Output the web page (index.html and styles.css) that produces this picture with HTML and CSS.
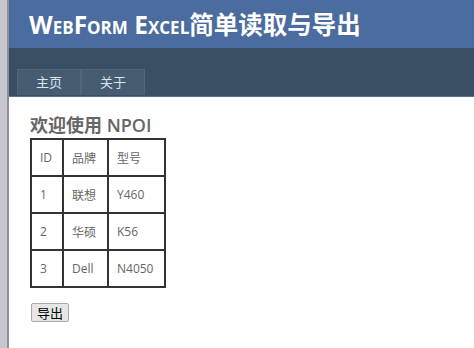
FILE: index.html
```html
<!DOCTYPE html>
<html>
<head>
  <title>WebForm Excel简单读取与导出</title>
  <link rel="stylesheet" href="styles.css">
</head>
<body>

  <div class="page">
    <div class="header">
      <h1>WebForm Excel简单读取与导出</h1>
    </div>
    <div class="nav">
      <div class="menu">
        <a href="#">主页</a>
        <a href="#">关于</a>
      </div>
    </div>

    <div class="main">
      <h2>欢迎使用 NPOI</h2>
      <table class="grid">
        <tr><td class="c1">ID</td><td class="c2">品牌</td><td class="c3">型号</td></tr>
        <tr><td>1</td><td>联想</td><td>Y460</td></tr>
        <tr><td>2</td><td>华硕</td><td>K56</td></tr>
        <tr><td>3</td><td>Dell</td><td>N4050</td></tr>
      </table>
      <button class="export">导出</button>
    </div>
  </div>

</body>
</html>
```
FILE: styles.css
```css
body {
  margin: 0;
  background-color: #c6c6ce;
  font-family: "Open Sans", "Noto Sans CJK SC", sans-serif;
  color: #696969;
}

.page {
  margin-left: 7px;
  border-left: 2px solid #8e8e96;
  background-color: #fff;
  height: 348px;
}

.header {
  background-color: #4b6c9e;
  height: 48px;
}

.header h1 {
  margin: 0;
  padding: 8px 0 0 20px;
  font-size: 24.5px;
  font-variant: small-caps;
  font-weight: bold;
  color: #fff;
  line-height: 34px;
  font-family: "Open Sans", "Noto Sans CJK SC", sans-serif;
}

.nav {
  background-color: #3a4f63;
  height: 48px;
  border-bottom: 1px solid #5c7590;
}

.menu {
  display: flex;
  padding: 21px 0 0 8px;
}

.menu a {
  display: block;
  width: 62px;
  height: 25px;
  line-height: 25px;
  text-align: center;
  background-color: #465c71;
  border: 1px solid #4f667c;
  border-bottom: none;
  color: #dde4ec;
  font-size: 13px;
  text-decoration: none;
}

.main {
  padding: 18px 0 0 21px;
}

.main h2 {
  margin: 0 0 3px;
  font-size: 18px;
  line-height: 20px;
  color: #666;
  font-weight: 600;
}

.grid {
  border-collapse: collapse;
  border: 2px solid #333;
}

.grid td {
  border: 2px solid #333;
  height: 35px;
  padding: 0 8px;
  font-size: 12px;
  color: #666;
}

.grid .c1 { width: 14px; }
.grid .c2 { width: 27px; }
.grid .c3 { width: 39px; }

.export {
  display: block;
  margin: 15px 0 0 1px;
  width: 38px;
  height: 19px;
  padding: 0;
  font-size: 13px;
  color: #000;
  background-color: #e6e6e6;
  border: 1px solid #a9a9a9;
  border-radius: 2px;
  font-family: "Noto Sans CJK SC", sans-serif;
  line-height: 17px;
}
```
